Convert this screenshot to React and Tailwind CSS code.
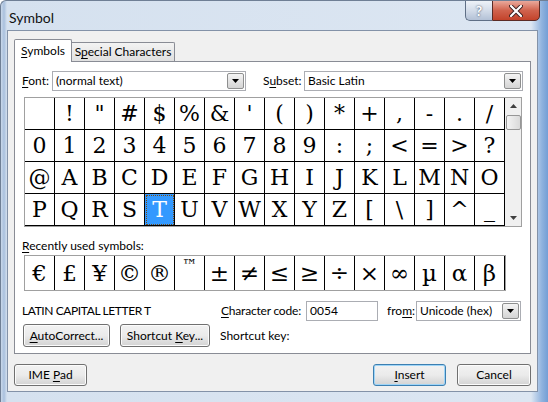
const ui = { fontFamily: 'Lato, "Noto Sans", sans-serif' };
const glyph = { fontFamily: '"DejaVu Serif", "Liberation Serif", serif' };

const rows = [
  [" ", "!", '"', "#", "$", "%", "&", "'", "(", ")", "*", "+", ",", "-", ".", "/"],
  ["0", "1", "2", "3", "4", "5", "6", "7", "8", "9", ":", ";", "<", "=", ">", "?"],
  ["@", "A", "B", "C", "D", "E", "F", "G", "H", "I", "J", "K", "L", "M", "N", "O"],
  ["P", "Q", "R", "S", "T", "U", "V", "W", "X", "Y", "Z", "[", "\\", "]", "^", "_"]
];

const recent = ["€", "£", "¥", "©", "®", "™", "±", "≠", "≤", "≥", "÷", "×", "∞", "µ", "α", "β"];

function Arrow() {
  return (
    <svg width="7" height="4" viewBox="0 0 7 4">
      <path d="M0 0h7L3.5 4z" fill="#000" />
    </svg>
  );
}

function Combo({ className, text }) {
  return (
    <div className={`flex h-[20px] shrink-0 items-center border border-[#abadb3] bg-white ${className}`}>
      <span className="flex-1 whitespace-nowrap pl-[3px] leading-none">{text}</span>
      <span className="mr-[1px] flex h-[16px] w-[17px] items-center justify-center rounded-[2px] border border-[#8e8f8f] bg-gradient-to-b from-[#f4f4f4] to-[#d4d4d4]">
        <Arrow />
      </span>
    </div>
  );
}

function Btn({ className, focused, children }) {
  return (
    <div
      className={`flex shrink-0 items-center justify-center whitespace-nowrap rounded-[3px] border bg-gradient-to-b from-[#f2f2f2] via-[#ebebeb] to-[#d3d3d3] ${
        focused ? "border-[#3c7fb1] shadow-[inset_0_0_0_1px_#9fd5f7]" : "border-[#707070] shadow-[inset_0_0_0_1px_#fcfcfc]"
      } ${className}`}
    >
      {children}
    </div>
  );
}

function U({ children }) {
  return <span className="underline underline-offset-2">{children}</span>;
}

export default function App() {
  return (
    <div
      className="flex h-[402px] w-[548px] flex-col overflow-hidden rounded-tl-[6px] border-l border-t border-[#6f7f95] bg-[linear-gradient(to_right,#c9d8ea_0,#a9c0dd_3px,#d5e1ef_6px,#dce6f2_530px,#8fb2de_541px,#6f9bd3_548px)] pl-[6px] pr-[10px] text-[12px] text-black"
      style={ui}
    >
      <div className="flex h-[29px] shrink-0 items-start">
        <span className="mt-[6px] pl-[2px] text-[14px] text-[#111]">Symbol</span>
        <div className="-mr-[2px] -mt-[1px] ml-auto flex h-[21px]">
          <div className="flex w-[27px] items-center justify-center rounded-bl-[5px] border border-r-0 border-[#5f6f86] bg-gradient-to-b from-[#eef2f8] via-[#d3dce9] to-[#b3c1d6] text-[14px] font-bold text-white [text-shadow:0_0_2px_#26364d]">
            ?
          </div>
          <div className="flex w-[48px] items-center justify-center rounded-br-[5px] border border-[#5b2b25] bg-gradient-to-b from-[#e9a99c] via-[#d0624d] to-[#c2422a]">
            <svg width="14" height="12" viewBox="0 0 14 12">
              <path d="M2 1l10 10M12 1L2 11" stroke="#3b2020" strokeWidth="4" strokeLinecap="round" />
              <path d="M2 1l10 10M12 1L2 11" stroke="#fff" strokeWidth="2.2" strokeLinecap="round" />
            </svg>
          </div>
        </div>
      </div>

      <div className="mb-[10px] flex flex-1 flex-col whitespace-nowrap border border-[#8392a8] bg-[#f0f0f0] px-[6px]">
        <div className="mt-[8px] flex h-[22px] items-end">
          <div className="relative z-10 -mb-[1px] flex h-[23px] w-[58px] items-center justify-center rounded-t-[2px] border border-b-0 border-[#898c95] bg-white">
            <span><U>S</U>ymbols</span>
          </div>
          <div className="flex h-[19px] w-[103px] items-center justify-center rounded-tr-[2px] border border-l-0 border-b-0 border-[#898c95] bg-gradient-to-b from-[#f3f3f3] to-[#e0e0e0]">
            <span>S<U>p</U>ecial Characters</span>
          </div>
        </div>

        <div className="flex h-[293px] flex-col border border-[#898c95] bg-white pl-[7px]">
          <div className="mt-[9px] flex h-[20px] items-center">
            <span className="w-[30px] shrink-0"><U>F</U>ont:</span>
            <Combo className="w-[194px]" text="(normal text)" />
            <span className="ml-[17px] w-[41px] shrink-0">S<U>u</U>bset:</span>
            <Combo className="w-[219px]" text="Basic Latin" />
          </div>

          <div className="ml-[2px] mt-[6px] flex w-[498px] border border-[#a0a0a0]">
            <div className="grid grid-cols-[repeat(16,30px)]" style={glyph}>
              {rows.flat().map((c, i) => {
                const sel = c === "T";
                return (
                  <div
                    key={i}
                    className={`flex h-[32px] items-center justify-center border-b border-r border-black text-[22px] leading-none ${
                      sel ? "bg-[#3399ff] text-white outline-1 -outline-offset-2 outline-dotted outline-[#7a4a10]" : "text-black"
                    }`}
                  >
                    {c}
                  </div>
                );
              })}
            </div>
            <div className="flex w-[16px] flex-col items-center bg-[#f0f0f0]">
              <svg className="mt-[6px]" width="7" height="4" viewBox="0 0 7 4">
                <path d="M0 4h7L3.5 0z" fill="#404040" />
              </svg>
              <div className="mt-[7px] h-[15px] w-[15px] rounded-[2px] border border-[#979797] bg-gradient-to-r from-[#f4f4f4] to-[#dadada]" />
              <svg className="mb-[6px] mt-auto" width="7" height="4" viewBox="0 0 7 4">
                <path d="M0 0h7L3.5 4z" fill="#404040" />
              </svg>
            </div>
          </div>

          <div className="mt-[11px] h-[15px] leading-[15px]">
            <U>R</U>ecently used symbols:
          </div>

          <div className="ml-[2px] mt-[2px] flex w-[482px] border border-[#a0a0a0]" style={glyph}>
            {recent.map((c, i) => (
              <div
                key={i}
                className="flex h-[34px] w-[30px] items-center justify-center border-r border-black text-[23px] leading-none"
              >
                {c === "™" ? <span className="relative -top-[8px] text-[15px]">{c}</span> : c}
              </div>
            ))}
          </div>

          <div className="mt-[10px] flex h-[20px] items-center">
            <span className="w-[199px] shrink-0 tracking-[-0.4px]">LATIN CAPITAL LETTER T</span>
            <span className="w-[85px] shrink-0 tracking-[-0.2px]"><U>C</U>haracter code:</span>
            <div className="flex h-[20px] w-[72px] shrink-0 items-center border border-[#abadb3] bg-white pl-[3px]">0054</div>
            <span className="ml-[9px] w-[29px] shrink-0">fro<U>m</U>:</span>
            <Combo className="w-[105px]" text="Unicode (hex)" />
          </div>

          <div className="mt-[3px] flex h-[23px] items-center">
            <Btn className="ml-[1px] h-[23px] w-[87px]"><span><U>A</U>utoCorrect...</span></Btn>
            <Btn className="ml-[10px] h-[23px] w-[90px]"><span>Shortcut <U>K</U>ey...</span></Btn>
            <span className="ml-[10px]">Shortcut key:</span>
          </div>
        </div>

        <div className="mt-[10px] flex h-[22px]">
          <Btn className="h-[22px] w-[73px]"><span>IME <U>P</U>ad</span></Btn>
          <Btn focused className="ml-auto h-[22px] w-[73px]"><span><U>I</U>nsert</span></Btn>
          <Btn className="ml-[11px] h-[22px] w-[74px]"><span>Cancel</span></Btn>
        </div>
      </div>
    </div>
  );
}
